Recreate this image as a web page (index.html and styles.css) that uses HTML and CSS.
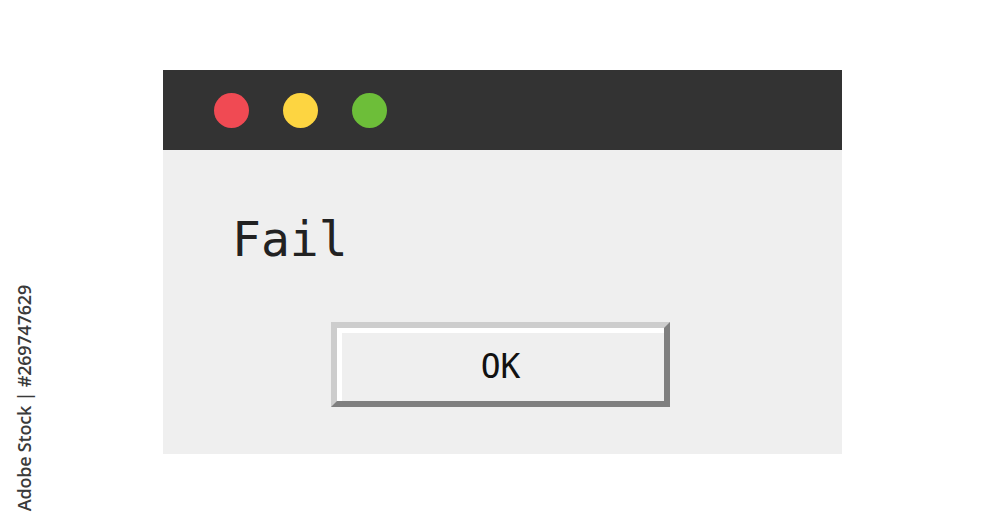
FILE: index.html
```html
<!DOCTYPE html>
<html lang="en">
<head>
    <meta charset="UTF-8">
    <meta name="viewport" content="width=device-width, initial-scale=1.0">
    <title>Fail</title>
    <link rel="stylesheet" href="styles.css">
</head>
<body>
    <div class="page">
        <div class="window">
            <div class="titlebar">
                <span class="dot red"></span>
                <span class="dot yellow"></span>
                <span class="dot green"></span>
            </div>
            <div class="content">
                <div class="message">Fail</div>
                <button class="ok-btn">OK</button>
            </div>
        </div>
    </div>
    <div class="credit">Adobe Stock | #269747629</div>
</body>
</html>
```

FILE: styles.css
```css
body {
    margin: 0;
    background: #fff;
    font-family: "DejaVu Sans Mono", monospace;
}
.page {
    padding: 70px 0 0 163px;
}
.window {
    width: 679px;
    height: 384px;
    background: #efefef;
    display: flex;
    flex-direction: column;
}
.titlebar {
    height: 80px;
    background: #333;
    display: flex;
    align-items: center;
    gap: 34px;
    padding-left: 51px;
    box-sizing: border-box;
}
.dot {
    width: 35px;
    height: 35px;
    border-radius: 50%;
}
.red { background: #f04a53; }
.yellow { background: #fdd541; }
.green { background: #6dbe39; }
.content {
    padding: 61px 0 0 69px;
}
.message {
    font-size: 48px;
    line-height: 56px;
    color: #222;
}
.ok-btn {
    display: block;
    margin: 55px 0 0 99px;
    width: 339px;
    height: 85px;
    box-sizing: border-box;
    background: #efefef;
    border-style: solid;
    border-width: 6px;
    border-color: #cdcdcd #7f7f7f #7f7f7f #cdcdcd;
    box-shadow: inset 5px 5px 0 #fff;
    font-family: "DejaVu Sans Mono", monospace;
    font-size: 33px;
    color: #111;
    padding: 4px 0 0 0;
}
.credit {
    position: absolute;
    left: 12px;
    top: 285px;
    writing-mode: vertical-rl;
    transform: rotate(180deg);
    font-family: "Open Sans", sans-serif;
    font-weight: 600;
    font-size: 18px;
    letter-spacing: -0.2px;
    color: #3a3a3a;
}
```
